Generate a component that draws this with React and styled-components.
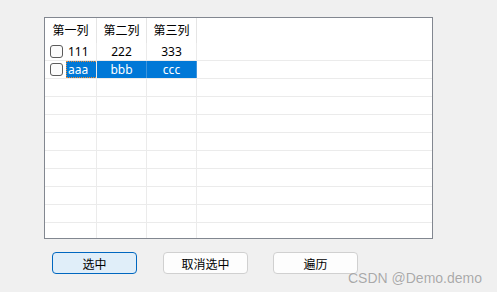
import React from 'react'
import styled, { createGlobalStyle } from 'styled-components'

const GlobalStyle = createGlobalStyle`
    html, body {
        margin: 0;
        padding: 0;
        background: #f0f0f0;
    }
    body {
        font-family: "Noto Sans", "Noto Sans CJK SC", sans-serif;
        font-size: 12px;
        color: #000;
    }
`

const Window = styled.div`
    position: relative;
    width: 497px;
    height: 292px;
    background: #f0f0f0;
    padding: 17px 0 0 44px;
    box-sizing: border-box;
`

const Table = styled.div`
    width: 389px;
    height: 222px;
    border: 1px solid #828790;
    background: #fff;
    box-sizing: border-box;
    overflow: hidden;
`

const Row = styled.div`
    display: grid;
    grid-template-columns: 52px 50px 50px 1fr;
    height: ${p => (p.$header ? '25px' : '18px')};
    box-sizing: border-box;
    border-bottom: ${p => (p.$header ? 'none' : '1px solid #ebebeb')};
`

const Cell = styled.div`
    display: flex;
    align-items: center;
    justify-content: ${p => (p.$left ? 'flex-start' : 'center')};
    padding-left: ${p => (p.$left ? '5px' : '0')};
    box-sizing: border-box;
    border-right: ${p => (p.$last ? 'none' : `1px solid ${p.$header ? '#e5e5e5' : '#ebebeb'}`)};
    white-space: nowrap;
    line-height: 1;
`

const Selected = styled.span`
    display: flex;
    align-items: center;
    justify-content: ${p => (p.$left ? 'flex-start' : 'center')};
    align-self: stretch;
    flex: 1;
    background: #0078d7;
    color: #fff;
    padding-left: ${p => (p.$left ? '1px' : '0')};
    box-sizing: border-box;
    border: ${p => (p.$focus ? '1px dotted #f08a30' : 'none')};
    border-right: none;
`

const Check = styled.span`
    width: 13px;
    height: 13px;
    border: 1px solid #5b5b5b;
    border-radius: 3px;
    background: #fbfbfb;
    box-sizing: border-box;
    margin-right: ${p => (p.$tight ? '3px' : '5px')};
    flex-shrink: 0;
`

const SelCell = styled(Cell)`
    border-right-color: ${p => (p.$blue ? '#3d94dc' : '#ebebeb')};
    background: ${p => (p.$blue ? '#0078d7' : 'transparent')};
    color: ${p => (p.$blue ? '#fff' : '#000')};
`

const Buttons = styled.div`
    display: flex;
    gap: 26px;
    margin: 13px 0 0 8px;
`

const Button = styled.button`
    width: 85px;
    height: 22px;
    padding: 0;
    border-radius: 4px;
    font-family: "Noto Sans CJK SC", sans-serif;
    font-size: 12px;
    color: #000;
    background: ${p => (p.$primary ? '#e0eef9' : '#fdfdfd')};
    border: 1px solid ${p => (p.$primary ? '#0067c0' : '#d0d0d0')};
    &:last-child {
        margin-left: -1px;
    }
`

const Watermark = styled.div`
    position: absolute;
    right: 15px;
    bottom: 6px;
    font-family: "Liberation Sans", Arial, sans-serif;
    font-size: 14px;
    color: #a9a9a9;
    text-shadow: 0 0 1px #fff;
`

function App() {
  const empty = Array.from({ length: 9 })
  return (
    <Window>
        <GlobalStyle />
        <Table>
            <Row $header>
                <Cell $header>第一列</Cell>
                <Cell $header>第二列</Cell>
                <Cell $header>第三列</Cell>
                <Cell $last />
            </Row>
            <Row>
                <Cell $left><Check />111</Cell>
                <Cell>222</Cell>
                <Cell>333</Cell>
                <Cell $last />
            </Row>
            <Row>
                <Cell $left><Check $tight /><Selected $left $focus>aaa</Selected></Cell>
                <SelCell $blue>bbb</SelCell>
                <SelCell $blue>ccc</SelCell>
                <Cell $last />
            </Row>
            {empty.map((_, i) => (
                <Row key={i}>
                    <Cell />
                    <Cell />
                    <Cell />
                    <Cell $last />
                </Row>
            ))}
        </Table>
        <Buttons>
            <Button $primary>选中</Button>
            <Button>取消选中</Button>
            <Button>遍历</Button>
        </Buttons>
        <Watermark>CSDN @Demo.demo</Watermark>
    </Window>
  )
}

export default App
